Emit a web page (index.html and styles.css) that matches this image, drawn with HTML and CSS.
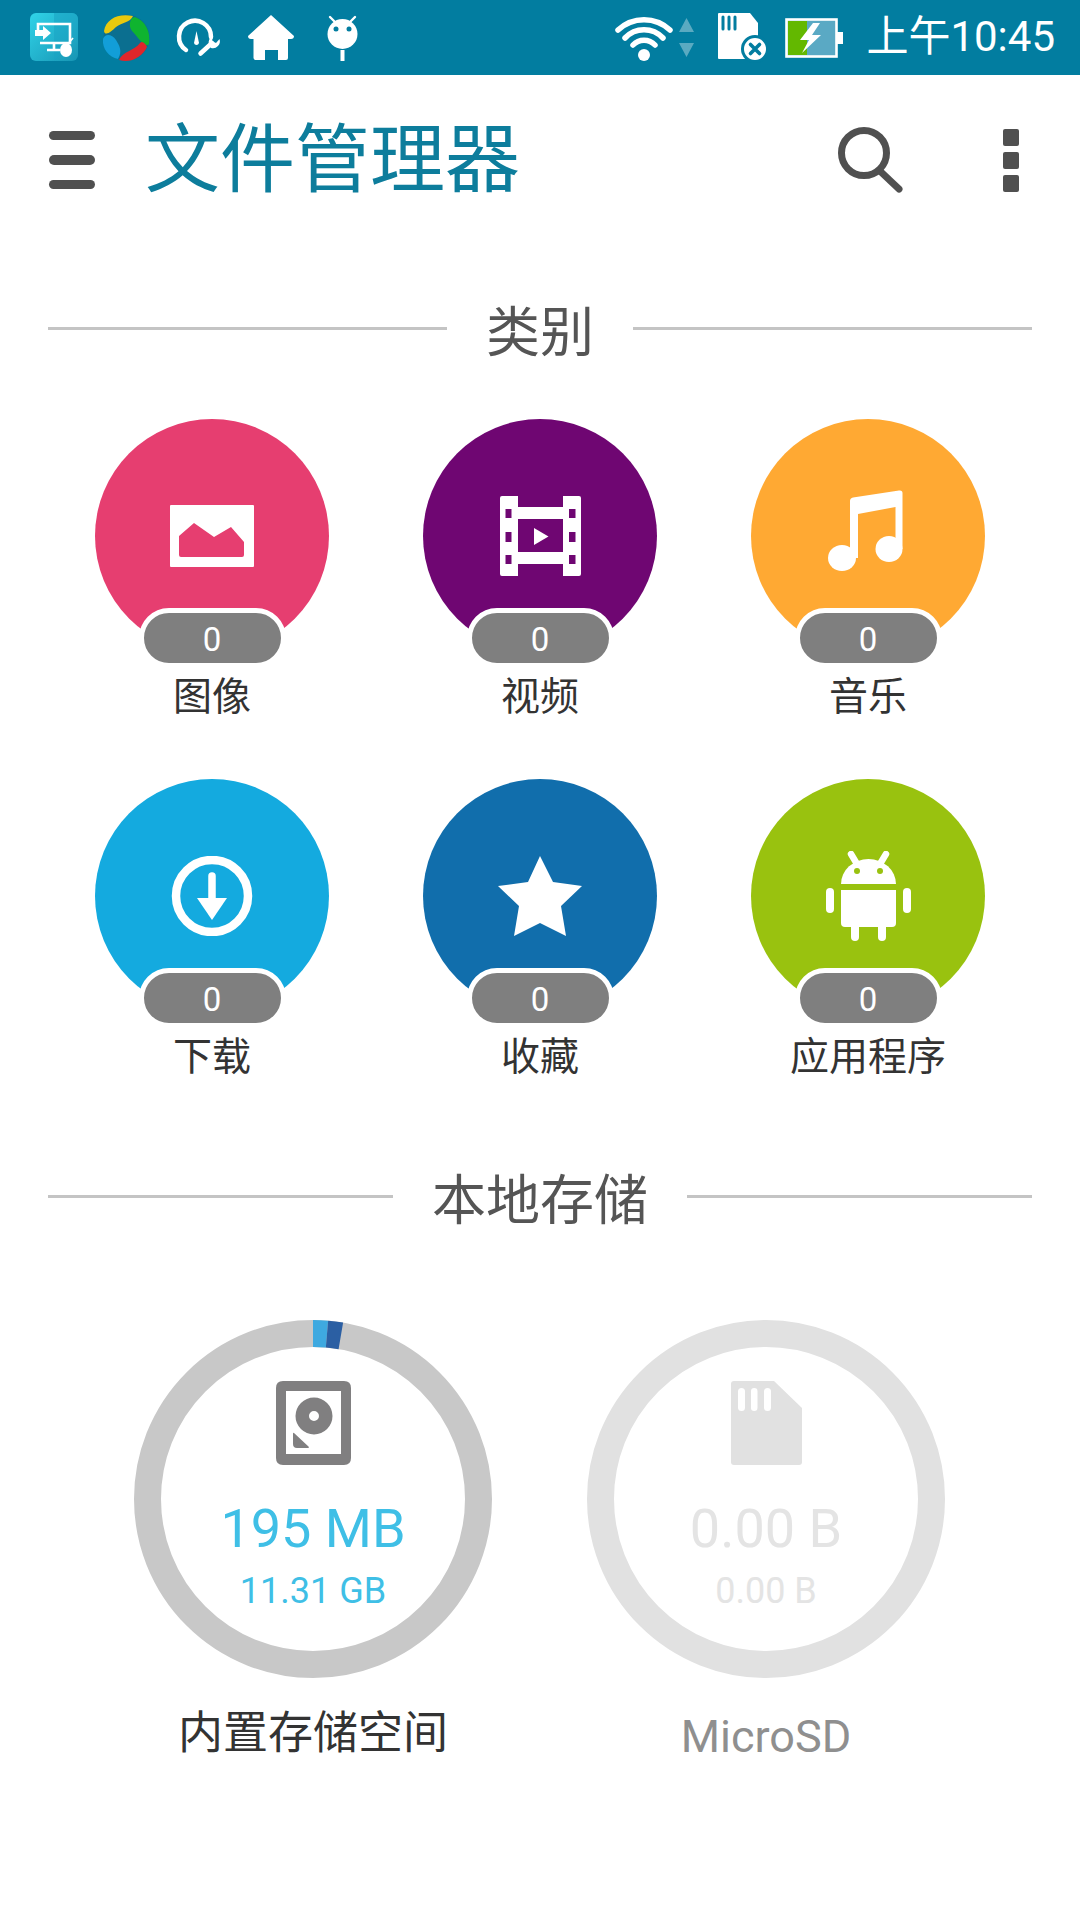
FILE: index.html
```html
<!DOCTYPE html>
<html lang="zh-CN">
<head>
    <meta charset="UTF-8">
    <meta name="viewport" content="width=device-width, initial-scale=1.0">
    <title>文件管理器</title>
    <link rel="stylesheet" href="styles.css">
</head>
<body>
    <!-- Status Bar -->
    <div class="status-bar">
        <div class="status-apps">
            <svg class="slot" viewBox="0 0 72 60">
                <defs>
                    <linearGradient id="castBg" x1="0" y1="0" x2="1" y2="1">
                        <stop offset="0" stop-color="#30d3e8"/>
                        <stop offset="1" stop-color="#1795b4"/>
                    </linearGradient>
                </defs>
                <rect x="12" y="6" width="48" height="48" rx="6" fill="url(#castBg)"/>
                <path d="M36 6H54a6 6 0 0 1 6 6V30L36 54Z" fill="#1ba5c4" opacity=".6"/>
                <path d="M20 23V17H52V36H22" fill="none" stroke="#fff" stroke-width="2.6"/>
                <path d="M17 23H25V19L33 26L25 33V29H17Z" fill="#fff"/>
                <path d="M36 37V42M29 43H42" fill="none" stroke="#fff" stroke-width="2.6"/>
                <ellipse cx="48" cy="43" rx="6" ry="7" fill="#fff"/>
                <path d="M50 37L55 31" stroke="#fff" stroke-width="1.6"/>
            </svg>
            <svg class="slot" viewBox="0 0 72 60">
                <circle cx="36.5" cy="30.5" r="23" fill="#0b6f90"/>
                <path d="M14 24C16 12 28 6 43 9C40 16 32 15 26 20C22 24 15 30 14 24Z" fill="#e8c90e"/>
                <path d="M45 10C55 14 61 24 59 37C55 42 48 30 42 24C38 19 40 10 45 10Z" fill="#0fb42f"/>
                <path d="M29 53C33 44 44 44 50 36C52 33 56 37 57 40C53 49 41 57 29 53Z" fill="#e0262b"/>
                <path d="M13 32C15 26 22 27 26 33C29 38 33 44 28 52C19 50 12 42 13 32Z" fill="#129ed8"/>
            </svg>
            <svg class="slot" viewBox="0 0 72 60">
                <path d="M24 43A16 16 0 1 1 49 30" fill="none" stroke="#fff" stroke-width="4.5" stroke-linecap="round"/>
                <path d="M34.500 24L37 36A2.600 2.600 0 0 1 32 36Z" fill="#fff"/>
                <path d="M38.500 46.500L50 36" stroke="#fff" stroke-width="4.500" stroke-linecap="round"/>
                <path d="M47 38A7 7 0 0 1 51 29L50 34L54 36L57.500 32A7 7 0 0 1 49 41Z" fill="#fff"/>
            </svg>
            <svg class="slot" viewBox="0 0 72 60">
                <path d="M37 8L60 29Q60 32 57 32H54V51Q54 53 52 53H44V43H31V53H22Q19.500 53 19.500 51V32H17Q14 32 14 29Z" fill="#fff"/>
            </svg>
            <svg class="slot" viewBox="0 0 72 60">
                <path d="M24 10L30 16M49 10L43 16" stroke="#fff" stroke-width="2.4" stroke-linecap="round"/>
                <circle cx="36.500" cy="27" r="15" fill="#fff"/>
                <circle cx="30" cy="22" r="2.500" fill="#027da0"/>
                <circle cx="43" cy="22" r="2.500" fill="#027da0"/>
                <rect x="34.500" y="43" width="4" height="11" fill="#fff"/>
            </svg>
        </div>
        <div class="status-right">
            <svg class="wifi" viewBox="0 0 79 60">
                <g fill="none" stroke="#fff" stroke-width="5.500" stroke-linecap="round">
                    <path d="M3 23A38 38 0 0 1 55 23"/>
                    <path d="M10 31A26 26 0 0 1 48 31"/>
                    <path d="M18 38A15 15 0 0 1 40 38"/>
                </g>
                <circle cx="29" cy="48" r="6" fill="#fff"/>
                <path d="M71.500 11L79 25H64ZM64 36H79L71.500 50Z" fill="#fff" opacity=".35"/>
            </svg>
            <svg class="sd-status" viewBox="0 0 50 60">
                <path d="M0 7Q0 6 1 6H32L40 16V50Q40 52 38 52H1Q0 52 0 51Z" fill="#fff"/>
                <path d="M5 10V22M11 10V22M17 10V22" stroke="#027da0" stroke-width="3" stroke-linecap="round"/>
                <circle cx="37" cy="42" r="14" fill="#027da0"/>
                <circle cx="37" cy="42" r="11" fill="#fff"/>
                <path d="M32.500 37.500L41.500 46.500M41.500 37.500L32.500 46.500" stroke="#027da0" stroke-width="3.600" stroke-linecap="round"/>
            </svg>
            <svg class="battery" viewBox="0 0 60 60">
                <rect x="1.500" y="12.500" width="50" height="37" fill="#5aa9c4" stroke="#fff" stroke-width="2.600"/>
                <rect x="3" y="14" width="19" height="34" fill="#63b800"/>
                <rect x="52" y="25" width="6" height="12" fill="#fff"/>
                <path d="M28 16L15 33H24L17 46L36 28H27L35 16Z" fill="#fff"/>
            </svg>
            <span class="clock">上午10:45</span>
        </div>
    </div>

    <!-- Toolbar -->
    <div class="toolbar">
        <div class="menu-btn"><span></span><span></span><span></span></div>
        <h1 class="title">文件管理器</h1>
        <svg class="search" viewBox="0 0 66 66">
            <circle cx="26" cy="26" r="22.500" fill="none" stroke="#505050" stroke-width="7"/>
            <path d="M43 45L61 62" stroke="#505050" stroke-width="7" stroke-linecap="round"/>
        </svg>
        <div class="more-btn"><span></span><span></span><span></span></div>
    </div>

    <!-- Categories -->
    <div class="section-head"><span>类别</span></div>
    <div class="cat-grid">
        <div class="cat">
            <div class="cat-circle pink">
                <svg width="84" height="62" viewBox="0 0 84 62">
                    <path fill-rule="evenodd" fill="#fff" d="M0 1Q0 0 1 0H83Q84 0 84 1V61Q84 62 83 62H1Q0 62 0 61ZM9 31V50Q9 52 11 52H72Q74 52 74 50V37L61 22L44 32L24 18Z"/>
                </svg>
                <div class="count">0</div>
            </div>
            <div class="cat-name">图像</div>
        </div>
        <div class="cat">
            <div class="cat-circle purple">
                <svg width="81" height="80" viewBox="0 0 81 80">
                    <path fill-rule="evenodd" fill="#fff" d="M0 2Q0 0 2 0H18V11H63V0H79Q81 0 81 2V78Q81 80 79 80H63V68H18V80H2Q0 80 0 78ZM18 23V56H63V23ZM5.500 13V22H11.500V13ZM5.500 36V46H11.500V36ZM5.500 59V68H11.500V59ZM69 13V22H75.500V13ZM69 36V46H75.500V36ZM69 59V68H75.500V59Z"/>
                    <path d="M34 32L48.500 40.500L34 49Z" fill="#fff"/>
                </svg>
                <div class="count">0</div>
            </div>
            <div class="cat-name">视频</div>
        </div>
        <div class="cat">
            <div class="cat-circle orange">
                <svg class="note" width="75" height="82" viewBox="0 0 75 82">
                    <path fill="#fff" d="M22 11Q22 8 25 7.500L71 .5Q74.500 0 74.500 3V59H67.500V17L30 24V68H22Z"/>
                    <ellipse cx="14" cy="68" rx="14" ry="13" fill="#fff"/>
                    <ellipse cx="61" cy="59" rx="13.500" ry="13" fill="#fff"/>
                </svg>
                <div class="count">0</div>
            </div>
            <div class="cat-name">音乐</div>
        </div>
        <div class="cat">
            <div class="cat-circle sky">
                <svg width="82" height="80" viewBox="0 0 82 80">
                    <circle cx="41" cy="40" r="36" fill="none" stroke="#fff" stroke-width="8.500"/>
                    <path d="M41 20V46" stroke="#fff" stroke-width="7.500" stroke-linecap="round"/>
                    <path d="M26 42H56L41 64Z" fill="#fff"/>
                </svg>
                <div class="count">0</div>
            </div>
            <div class="cat-name">下载</div>
        </div>
        <div class="cat">
            <div class="cat-circle blue">
                <svg width="84" height="80" viewBox="0 0 84 80">
                    <path fill="#fff" d="M42 0L55 26L84 30L63 50L68 80L42 67L16 80L21 50L0 30L30 26Z"/>
                </svg>
                <div class="count">0</div>
            </div>
            <div class="cat-name">收藏</div>
        </div>
        <div class="cat">
            <div class="cat-circle green">
                <svg width="85" height="90" viewBox="0 0 85 90">
                    <path d="M25 3L31 13M60 3L54 13" stroke="#fff" stroke-width="6.500" stroke-linecap="round"/>
                    <path d="M15 33A27.500 25 0 0 1 70 33Z" fill="#fff"/>
                    <circle cx="31" cy="20" r="3" fill="#99c20f"/>
                    <circle cx="54" cy="20" r="3" fill="#99c20f"/>
                    <path d="M15 39H70V72Q70 76 66 76H19Q15 76 15 72Z" fill="#fff"/>
                    <rect x="0" y="37" width="8" height="25" rx="4" fill="#fff"/>
                    <rect x="77" y="37" width="8" height="25" rx="4" fill="#fff"/>
                    <rect x="25" y="70" width="8" height="20" rx="4" fill="#fff"/>
                    <rect x="52" y="70" width="8" height="20" rx="4" fill="#fff"/>
                </svg>
                <div class="count">0</div>
            </div>
            <div class="cat-name">应用程序</div>
        </div>
    </div>

    <!-- Local Storage -->
    <div class="section-head second"><span>本地存储</span></div>
    <div class="storage-row">
        <div class="storage">
            <div class="ring">
                <svg class="ring-used" viewBox="0 0 358 358">
                    <circle cx="179" cy="179" r="165.500" fill="none" stroke="#3ea9e0" stroke-width="27" stroke-dasharray="14 1026" transform="rotate(-90 179 179)"/>
                    <circle cx="179" cy="179" r="165.500" fill="none" stroke="#2b5fa3" stroke-width="27" stroke-dasharray="14 1026" stroke-dashoffset="-14" transform="rotate(-90 179 179)"/>
                </svg>
                <svg width="75" height="84" viewBox="0 0 75 84">
                    <path fill-rule="evenodd" fill="#807f80" d="M7 0H68Q75 0 75 7V77Q75 84 68 84H7Q0 84 0 77V7Q0 0 7 0ZM10 10V73H65V10Z"/>
                    <path fill-rule="evenodd" fill="#807f80" d="M38 16.500A18.500 18.500 0 1 1 38 53.500A18.500 18.500 0 1 1 38 16.500ZM38 30A5 5 0 1 0 38 40A5 5 0 1 0 38 30Z"/>
                    <path d="M18 52L33 66Q33 67 32 67H21Q17 67 17 63V53Q17 51 18 52Z" fill="#807f80"/>
                </svg>
                <div class="used">195 MB</div>
                <div class="total">11.31 GB</div>
            </div>
            <div class="storage-name">内置存储空间</div>
        </div>
        <div class="storage off">
            <div class="ring">
                <svg width="71" height="84" viewBox="0 0 71 84">
                    <path fill="#e1e1e1" d="M0 3Q0 0 3 0H43L71 27V81Q71 84 68 84H3Q0 84 0 81Z"/>
                    <rect x="7" y="7" width="7" height="23" rx="3.500" fill="#fff"/>
                    <rect x="20" y="7" width="6.500" height="23" rx="3.200" fill="#fff"/>
                    <rect x="33" y="7" width="7" height="23" rx="3.500" fill="#fff"/>
                </svg>
                <div class="used">0.00 B</div>
                <div class="total">0.00 B</div>
            </div>
            <div class="storage-name">MicroSD</div>
        </div>
    </div>
</body>
</html>
```

FILE: styles.css
```css
/* General Reset */
html, body {
    margin: 0;
    padding: 0;
    background-color: #fff;
    font-family: Roboto, "Noto Sans CJK SC", sans-serif;
    color: #333;
}
/* Status Bar */
.status-bar {
    height: 75px;
    box-sizing: border-box;
    padding: 7px 25px 0 18px;
    display: flex;
    justify-content: space-between;
    background-color: #027da0;
}
.status-apps {
    display: flex;
}
.slot {
    width: 72px;
    height: 60px;
}
.status-right {
    display: flex;
    gap: 17px;
    height: 60px;
}
.wifi {
    width: 79px;
    height: 60px;
    margin-right: 7px;
}
.sd-status {
    width: 50px;
    height: 60px;
}
.battery {
    width: 60px;
    height: 60px;
}
.clock {
    margin-left: 4px;
    font-size: 42px;
    line-height: 60px;
    color: #fff;
}
/* Toolbar */
.toolbar {
    height: 170px;
    padding: 0 61px 0 49px;
    display: flex;
    align-items: center;
}
.menu-btn {
    width: 46px;
    display: flex;
    flex-direction: column;
    gap: 15px;
}
.menu-btn span {
    height: 9.5px;
    border-radius: 5px;
    background-color: #505050;
}
.title {
    flex: 1;
    margin: 0 0 0 50px;
    font-size: 75px;
    font-weight: 400;
    line-height: 90px;
    color: #0d7d9c;
}
.search {
    width: 66px;
    height: 66px;
}
.more-btn {
    width: 16px;
    margin-left: 99px;
    display: flex;
    flex-direction: column;
    gap: 6px;
}
.more-btn span {
    height: 17px;
    border-radius: 2px;
    background-color: #505050;
}
/* Section Headings */
.section-head {
    height: 70px;
    margin-top: 48px;
    padding: 0 48px;
    display: flex;
    align-items: center;
    gap: 39px;
    font-size: 54px;
    color: #555;
}
.section-head::before, .section-head::after {
    content: "";
    flex: 1;
    height: 3px;
    background-color: #c4c4c4;
}
.section-head.second {
    margin-top: 79px;
}
/* Categories */
.cat-grid {
    margin-top: 56px;
    display: grid;
    grid-template-columns: repeat(3, 328px);
    justify-content: center;
    row-gap: 57px;
}
.cat {
    display: flex;
    flex-direction: column;
    align-items: center;
}
.cat-circle {
    position: relative;
    width: 234px;
    height: 234px;
    border-radius: 50%;
    display: flex;
    align-items: center;
    justify-content: center;
}
.pink { background-color: #e63e70; }
.purple { background-color: #6f0672; }
.orange { background-color: #ffa933; }
.sky { background-color: #14aadf; }
.blue { background-color: #116eac; }
.green { background-color: #99c20f; }
.note {
    margin: 0 5px 10px 0;
}
.count {
    position: absolute;
    left: 43.5px;
    bottom: -15px;
    width: 137px;
    height: 50px;
    border: 5px solid #fff;
    border-radius: 30px;
    background-color: #7f7f7f;
    font-size: 33px;
    line-height: 53px;
    text-align: center;
    color: #fff;
}
.cat-name {
    margin-top: 19px;
    font-size: 39px;
    line-height: 50px;
}
/* Storage */
.storage-row {
    margin-top: 89px;
    padding-right: 1px;
    display: flex;
    justify-content: center;
    gap: 95px;
}
.storage {
    width: 358px;
    display: flex;
    flex-direction: column;
    align-items: center;
}
.ring {
    position: relative;
    box-sizing: border-box;
    width: 358px;
    height: 358px;
    padding-top: 34px;
    border: 27px solid #c8c8c8;
    border-radius: 50%;
    display: flex;
    flex-direction: column;
    align-items: center;
}
.ring-used {
    position: absolute;
    left: -27px;
    top: -27px;
    width: 358px;
    height: 358px;
}
.used {
    margin-top: 32px;
    font-size: 54px;
    line-height: 64px;
    color: #3fbfe6;
}
.total {
    margin-top: 8px;
    font-size: 36px;
    line-height: 44px;
    color: #3fbfe6;
}
.storage-name {
    margin-top: 26px;
    font-size: 45px;
    line-height: 60px;
}
.off .ring {
    border-color: #e1e1e1;
}
.off .used, .off .total {
    color: #e4e4e4;
}
.off .storage-name {
    margin-top: 29px;
    color: #8f8f8f;
}
```
